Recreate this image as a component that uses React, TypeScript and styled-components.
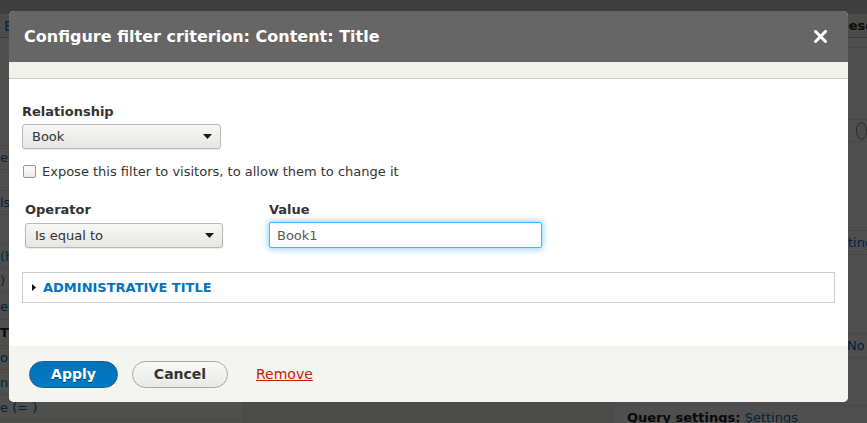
import React from 'react';
import styled, {createGlobalStyle} from 'styled-components';

const GlobalStyle = createGlobalStyle`
  * {
    box-sizing: border-box;
  }

  html, body {
    margin: 0;
    padding: 0;
  }

  body {
    width: 867px;
    height: 423px;
    overflow: hidden;
    font-family: "DejaVu Sans", Verdana, sans-serif;
    font-size: 13px;
    color: #333;
  }
`;

type BgRowData = {
    h: number;
    text?: string;
    bold?: boolean;
    indent?: number;
    circle?: boolean;
    link?: string;
};

// rows of the views page that sits behind the dialog
const leftRows: BgRowData[] = [
    {h: 108},
    {h: 24, text: 'eed'},
    {h: 21},
    {h: 24, text: 'ls'},
    {h: 30},
    {h: 24, text: '(h'},
    {h: 24, text: ')'},
    {h: 27, text: 'e'},
    {h: 26, text: 'T', bold: true},
    {h: 24, text: 'oli'},
    {h: 25, text: 'nt'},
    {h: 25, text: 'e (= )'},
];

const rightRows: BgRowData[] = [
    {h: 10},
    {h: 72},
    {h: 22, circle: true, indent: 241},
    {h: 89},
    {h: 24, text: 'ting', indent: 233},
    {h: 79},
    {h: 24, text: 'No', indent: 232},
    {h: 48},
    {h: 24, text: 'Query settings:', bold: true, link: 'Settings', indent: 12},
];

export default function App() {

    const renderBgRow = (row: BgRowData, i: number) => {
        return <BgRow key={i} $h={row.h} $indent={row.indent ?? 0}>
            {row.circle && <RoundButton/>}
            {row.text && (row.bold
                ? <BgStrong>{row.text}</BgStrong>
                : <BgLink>{row.text}</BgLink>)}
            {row.link && <BgLink>&nbsp;{row.link}</BgLink>}
        </BgRow>;
    };

    const renderBackdrop = () => {
        return <>
            <TopStrip/>
            <Toolbar>
                <ToolbarCell $indent={4}><ToolbarLink>Edit</ToolbarLink></ToolbarCell>
                <ToolbarCell/>
                <ToolbarCell $indent={223}><ToolbarText>Descr</ToolbarText></ToolbarCell>
            </Toolbar>
            <Columns>
                <LeftCol>{leftRows.map(renderBgRow)}</LeftCol>
                <MidCol/>
                <RightCol>{rightRows.map(renderBgRow)}</RightCol>
            </Columns>
            <Overlay/>
        </>;
    };

    const renderDialog = () => {
        return <Dialog role="dialog">
            <TitleBar>
                <Title>Configure filter criterion: Content: Title</Title>
                <CloseButton type="button" aria-label="Close">
                    <svg width="13" height="13" viewBox="0 0 13 13">
                        <path d="M1.5 1.5 L11.5 11.5 M11.5 1.5 L1.5 11.5" stroke="#fff" strokeWidth="3" strokeLinecap="square"/>
                    </svg>
                </CloseButton>
            </TitleBar>
            <Strip/>

            <Body>
                <Label $mb={3}>Relationship</Label>
                <Select $width={199}>
                    Book
                    <Caret/>
                </Select>

                <CheckRow>
                    <Checkbox/>
                    Expose this filter to visitors, to allow them to change it
                </CheckRow>

                <FieldRow>
                    <OperatorBox>
                        <Label $mb={4}>Operator</Label>
                        <Select $width={198}>
                            Is equal to
                            <Caret/>
                        </Select>
                    </OperatorBox>
                    <div>
                        <Label $mb={3}>Value</Label>
                        <TextInput value="Book1" readOnly/>
                    </div>
                </FieldRow>

                <Details>
                    <svg width="4" height="7" viewBox="0 0 4 7">
                        <polygon points="0,0 4,3.5 0,7" fill="#111"/>
                    </svg>
                    <Summary>Administrative title</Summary>
                </Details>
            </Body>

            <Footer>
                <Button $primary $width={89} type="button">Apply</Button>
                <Button $width={96} type="button">Cancel</Button>
                <DangerLink href="#">Remove</DangerLink>
            </Footer>
        </Dialog>;
    };

    return (
        <Page>
            <GlobalStyle/>
            {renderBackdrop()}
            {renderDialog()}
        </Page>
    );
}


const Caret = () => <svg width="9" height="5" viewBox="0 0 9 5">
    <polygon points="0,0 9,0 4.5,5" fill="#1a1a1a"/>
</svg>;


const Page = styled.div`
  position: relative;
  width: 867px;
  height: 423px;
  overflow: hidden;
  background: #fdfdfb;
`;

const TopStrip = styled.div`
  height: 14px;
  background: #c9c9c9;
`;

const Toolbar = styled.div`
  display: grid;
  grid-template-columns: 242px 373px 1fr;
  height: 24px;
  background: #f0f0ec;
  border-bottom: 1px solid #bbb;
`;

const ToolbarCell = styled.div<{$indent?: number}>`
  display: flex;
  align-items: center;
  padding-left: ${p => p.$indent ?? 0}px;
  white-space: nowrap;
  overflow: hidden;
`;

const ToolbarLink = styled.span`
  font-size: 14px;
  color: #0074bd;
`;

const ToolbarText = styled.span`
  font-size: 13px;
  font-weight: bold;
  color: #222;
`;

const Columns = styled.div`
  display: grid;
  grid-template-columns: 242px 373px 1fr;
  height: 385px;
`;

const LeftCol = styled.div`
  background: #fdfdfb;
  overflow: hidden;
`;

const MidCol = styled.div`
  background: #f1f1ee;
`;

const RightCol = styled.div`
  background: #ffffff;
  overflow: hidden;
`;

const BgRow = styled.div<{$h: number; $indent: number}>`
  height: ${p => p.$h}px;
  display: flex;
  align-items: center;
  padding-left: ${p => p.$indent}px;
  border-bottom: 1px solid #e4e4e0;
  white-space: nowrap;
`;

const BgLink = styled.span`
  color: #0074bd;
  font-size: 13px;
`;

const BgStrong = styled.span`
  color: #222;
  font-weight: bold;
  font-size: 13px;
`;

const RoundButton = styled.span`
  width: 18px;
  height: 18px;
  border-radius: 50%;
  border: 1px solid #8a8a8a;
  background: #f4f4f1;
`;

const Overlay = styled.div`
  position: absolute;
  inset: 0;
  background: rgba(0, 0, 0, 0.69);
`;

const Dialog = styled.div`
  position: absolute;
  left: 9px;
  top: 11px;
  width: 839px;
  height: 391px;
  display: flex;
  flex-direction: column;
  border-radius: 5px;
  overflow: hidden;
  background: #fff;
`;

const TitleBar = styled.div`
  flex: none;
  height: 51px;
  display: flex;
  align-items: center;
  justify-content: space-between;
  padding: 0 21px 1px 15px;
  background: #666;
`;

const Title = styled.h1`
  margin: 0;
  font-size: 16px;
  font-weight: bold;
  color: #fff;
`;

const CloseButton = styled.button`
  display: flex;
  padding: 0;
  border: none;
  background: none;
  cursor: pointer;
`;

const Strip = styled.div`
  flex: none;
  height: 17px;
  background: #f2f2ed;
  border-bottom: 1px solid #cbcbcb;
`;

const Body = styled.div`
  flex: none;
  height: 267px;
  padding: 24px 13px 0;
  background: #fff;
`;

const Label = styled.label<{$mb: number}>`
  display: block;
  font-size: 13px;
  line-height: 18px;
  font-weight: bold;
  color: #333;
  margin-bottom: ${p => p.$mb}px;
`;

const Select = styled.div<{$width: number}>`
  width: ${p => p.$width}px;
  height: 25px;
  display: flex;
  align-items: center;
  justify-content: space-between;
  padding: 0 8px 0 9px;
  border: 1px solid #b8b8b8;
  border-radius: 3px;
  background: linear-gradient(#f7f7f5, #e6e6e3);
  box-shadow: 0 1px 1px rgba(0, 0, 0, 0.08);
  font-size: 13px;
  color: #333;
`;

const CheckRow = styled.div`
  display: flex;
  align-items: center;
  gap: 6px;
  margin-top: 11px;
  height: 22px;
  font-size: 13px;
  color: #333;
`;

const Checkbox = styled.span`
  width: 13px;
  height: 13px;
  margin: 0 0 0 1px;
  border: 1px solid #979797;
  border-radius: 2px;
  background: linear-gradient(#fcfcfc, #e9e9e9);
`;

const FieldRow = styled.div`
  display: flex;
  margin-top: 19px;
`;

const OperatorBox = styled.div`
  width: 247px;
  padding-left: 3px;
`;

const TextInput = styled.input`
  display: block;
  width: 273px;
  height: 26px;
  padding: 0 7px;
  border: 1px solid #40b6ff;
  border-radius: 2px;
  box-shadow: 0 0 6px 1px rgba(64, 182, 255, 0.6);
  font: 13px "DejaVu Sans", Verdana, sans-serif;
  color: #595959;
  outline: none;
`;

const Details = styled.div`
  display: flex;
  align-items: center;
  gap: 7px;
  height: 31px;
  margin-top: 24px;
  padding-left: 9px;
  border: 1px solid #ccc;
`;

const Summary = styled.span`
  font-size: 13px;
  font-weight: bold;
  text-transform: uppercase;
  color: #0074bd;
`;

const Footer = styled.div`
  flex: 1;
  display: flex;
  align-items: center;
  gap: 14px;
  padding-left: 20px;
  background: #f4f4f0;
`;

const Button = styled.button<{$primary?: boolean; $width: number}>`
  width: ${p => p.$width}px;
  height: 27px;
  padding: 0;
  border-radius: 20px;
  font: bold 14px "DejaVu Sans", Verdana, sans-serif;
  cursor: pointer;
  border: 1px solid #a6a6a6;
  color: #333;
  background: linear-gradient(to top, #e8e8e4, #f9f9f7);
  text-shadow: 0 1px rgba(255, 255, 255, 0.6);

  ${p => p.$primary && `
    border-color: #1e5c90;
    color: #fff;
    background: linear-gradient(to top, #007bc6, #0071b8);
    text-shadow: 0 1px rgba(0, 0, 0, 0.5);
  `}
`;

const DangerLink = styled.a`
  margin-left: 14px;
  font-size: 14px;
  color: #c72100;
  text-decoration: underline;
`;
